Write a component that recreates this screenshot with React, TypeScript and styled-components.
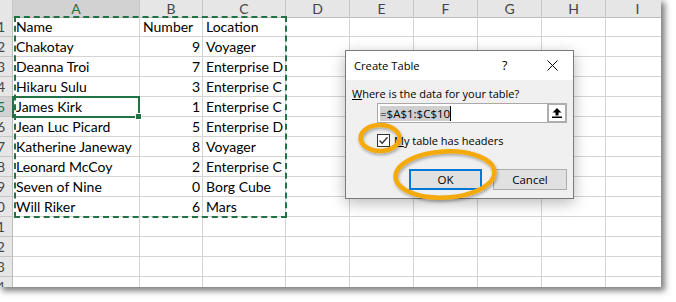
import styled, { createGlobalStyle } from "styled-components";

const GlobalStyle = createGlobalStyle`
  html, body {
    margin: 0;
    padding: 0;
    background: #ffffff;
  }
`;

const COLUMNS = ["A", "B", "C", "D", "E", "F", "G", "H", "I"];

const crew: [string, string, string][] = [
  ["Name", "Number", "Location"],
  ["Chakotay", "9", "Voyager"],
  ["Deanna Troi", "7", "Enterprise D"],
  ["Hikaru Sulu", "3", "Enterprise C"],
  ["James Kirk", "1", "Enterprise C"],
  ["Jean Luc Picard", "5", "Enterprise D"],
  ["Katherine Janeway", "8", "Voyager"],
  ["Leonard McCoy", "2", "Enterprise C"],
  ["Seven of Nine", "0", "Borg Cube"],
  ["Will Riker", "6", "Mars"],
];

const TOTAL_ROWS = 14;
const SELECTED_ROW = 5;

const Frame = styled.div`
  position: relative;
  width: 661px;
  height: 287px;
  margin-bottom: 15px;
`;

const Sheet = styled.div`
  position: relative;
  width: 661px;
  height: 287px;
  overflow: hidden;
  background: #ffffff;
  box-shadow: 3px 3px 6px 1px rgba(0, 0, 0, 0.5);
  font-family: Lato, "Open Sans", sans-serif;
`;

const Row = styled.div<{ $height: number }>`
  display: grid;
  grid-template-columns: 13px 127px 63px 83px repeat(6, 64px);
  height: ${(p) => p.$height}px;
`;

const ColHeader = styled.div<{ $active?: boolean }>`
  display: flex;
  align-items: center;
  justify-content: center;
  box-sizing: border-box;
  background: ${(p) => (p.$active ? "#d2d2d2" : "#e6e6e6")};
  color: ${(p) => (p.$active ? "#217346" : "#444444")};
  border-right: 1px solid #c6c6c6;
  border-bottom: 1px solid #bdbdbd;
  font-size: 14px;
`;

const RowHeader = styled.div<{ $active?: boolean }>`
  display: flex;
  align-items: center;
  justify-content: flex-end;
  box-sizing: border-box;
  overflow: hidden;
  padding-right: 7px;
  background: ${(p) => (p.$active ? "#d2d2d2" : "#e6e6e6")};
  color: ${(p) => (p.$active ? "#217346" : "#444444")};
  border-right: 1px solid #bdbdbd;
  border-bottom: 1px solid #c6c6c6;
  font-size: 14px;
`;

const Cell = styled.div<{ $numeric?: boolean }>`
  display: flex;
  align-items: flex-end;
  justify-content: ${(p) => (p.$numeric ? "flex-end" : "flex-start")};
  box-sizing: border-box;
  padding: 0 2px 0 3px;
  border-right: 1px solid #d4d4d4;
  border-bottom: 1px solid #d4d4d4;
  white-space: nowrap;
  overflow: hidden;
  color: #000000;
  font-size: 14px;
  line-height: 18px;
`;

const Marquee = styled.div`
  position: absolute;
  left: 14px;
  top: 16px;
  width: 273px;
  height: 202px;
  box-sizing: border-box;
  border: 2px dashed #217346;
  pointer-events: none;
`;

const ActiveCell = styled.div`
  position: absolute;
  left: 12px;
  top: 96px;
  width: 128px;
  height: 22px;
  box-sizing: border-box;
  border: 2px solid #217346;
  pointer-events: none;
`;

const FillHandle = styled.div`
  position: absolute;
  right: -4px;
  bottom: -4px;
  width: 5px;
  height: 5px;
  background: #217346;
  border: 1px solid #ffffff;
`;

const Dialog = styled.div`
  position: absolute;
  left: 345px;
  top: 50px;
  width: 229px;
  height: 149px;
  box-sizing: border-box;
  display: flex;
  flex-direction: column;
  border: 1px solid #7a7a7a;
  background: #f0f0f0;
  box-shadow: 0 4px 14px rgba(0, 0, 0, 0.28);
  font-family: "Open Sans", "Noto Sans", sans-serif;
  font-size: 11px;
  color: #000000;
`;

const TitleBar = styled.div`
  display: flex;
  align-items: center;
  height: 29px;
  padding: 0 8px 0 8px;
  background: #ffffff;
`;

const Title = styled.span`
  flex: 1;
  font-size: 11.2px;
`;

const Help = styled.span`
  width: 14px;
  margin-right: 31px;
  font-size: 12.5px;
`;

const CloseIcon = styled.svg`
  width: 11px;
  height: 11px;
  margin-right: 7px;
`;

const Body = styled.div`
  display: flex;
  flex-direction: column;
  padding: 6px 6px 0 6px;
`;

const Prompt = styled.div`
  height: 16px;
  line-height: 16px;
  font-size: 11px;
  & u {
    text-decoration-thickness: 1px;
  }
`;

const InputRow = styled.div`
  display: flex;
  margin: 1px 0 0 25px;
  height: 20px;
`;

const RangeInput = styled.div`
  flex: 1;
  display: flex;
  align-items: center;
  box-sizing: border-box;
  padding-left: 2px;
  background: #ffffff;
  border: 1px solid #a9a9a9;
  border-right: none;
  font-size: 11.5px;
`;

const Selection = styled.span`
  background: #cfcfcf;
  line-height: 15px;
`;

const Caret = styled.span`
  display: inline-block;
  width: 1px;
  height: 15px;
  background: #000000;
`;

const CollapseButton = styled.div`
  width: 20px;
  box-sizing: border-box;
  display: flex;
  align-items: center;
  justify-content: center;
  background: #ffffff;
  border: 2px solid #adadad;
`;

const CheckRow = styled.label`
  display: flex;
  align-items: center;
  gap: 4px;
  margin: 11px 0 0 25px;
  height: 13px;
  font-size: 11px;
`;

const CheckBox = styled.span`
  width: 13px;
  height: 13px;
  box-sizing: border-box;
  display: flex;
  align-items: center;
  justify-content: center;
  background: #ffffff;
  border: 1px solid #333333;
`;

const ButtonRow = styled.div`
  display: flex;
  justify-content: flex-end;
  gap: 11px;
  margin-top: 22px;
`;

const DialogButton = styled.div<{ $primary?: boolean }>`
  width: ${(p) => (p.$primary ? 73 : 74)}px;
  height: 21px;
  box-sizing: border-box;
  display: flex;
  align-items: center;
  justify-content: center;
  background: #e1e1e1;
  border: ${(p) => (p.$primary ? "2px solid #0078d7" : "1px solid #adadad")};
  font-size: 11.5px;
`;

const Annotations = styled.svg`
  position: absolute;
  left: 0;
  top: 0;
  width: 661px;
  height: 287px;
  pointer-events: none;
  overflow: visible;
`;

export default function App() {
  const rows = Array.from({ length: TOTAL_ROWS }, (_, i) => i + 1);
  return (
    <>
      <GlobalStyle />
      <Frame>
        <Sheet>
          <Row $height={17}>
            <ColHeader />
            {COLUMNS.map((c) => (
              <ColHeader key={c} $active={c === "A"}>
                {c}
              </ColHeader>
            ))}
          </Row>
          {rows.map((n) => {
            const data = crew[n - 1];
            return (
              <Row key={n} $height={20}>
                <RowHeader $active={n === SELECTED_ROW}>{n}</RowHeader>
                <Cell>{data?.[0]}</Cell>
                <Cell $numeric={n > 1}>{data?.[1]}</Cell>
                <Cell>{data?.[2]}</Cell>
                {COLUMNS.slice(3).map((c) => (
                  <Cell key={c} />
                ))}
              </Row>
            );
          })}

          <Marquee />
          <ActiveCell>
            <FillHandle />
          </ActiveCell>

          <Dialog>
            <TitleBar>
              <Title>Create Table</Title>
              <Help>?</Help>
              <CloseIcon viewBox="0 0 11 11">
                <path d="M0.5 0.5 L10.5 10.5 M10.5 0.5 L0.5 10.5" stroke="#000" strokeWidth="1" fill="none" />
              </CloseIcon>
            </TitleBar>
            <Body>
              <Prompt>
                <u>W</u>here is the data for your table?
              </Prompt>
              <InputRow>
                <RangeInput>
                  <Selection>=$A$1:$C$10</Selection>
                  <Caret />
                </RangeInput>
                <CollapseButton>
                  <svg width="10" height="10" viewBox="0 0 10 10">
                    <path d="M5 0 L9.5 4.5 L6.5 4.5 L6.5 7.5 L3.5 7.5 L3.5 4.5 L0.5 4.5 Z" fill="#000" />
                    <rect x="0" y="8.5" width="10" height="1.5" fill="#000" />
                  </svg>
                </CollapseButton>
              </InputRow>
              <CheckRow>
                <CheckBox>
                  <svg width="11" height="11" viewBox="0 0 11 11">
                    <path d="M1.5 5.5 L4.2 8.3 L9.5 2.2" stroke="#333" strokeWidth="1.3" fill="none" />
                  </svg>
                </CheckBox>
                <span>
                  <u>M</u>y table has headers
                </span>
              </CheckRow>
              <ButtonRow>
                <DialogButton $primary>OK</DialogButton>
                <DialogButton>Cancel</DialogButton>
              </ButtonRow>
            </Body>
          </Dialog>

          <Annotations viewBox="0 0 661 287">
            <defs>
              <filter id="soft" x="-20%" y="-20%" width="140%" height="140%">
                <feDropShadow dx="1" dy="2" stdDeviation="1.5" floodColor="#000" floodOpacity="0.3" />
              </filter>
            </defs>
            <g fill="none" stroke="#f4a90f" strokeWidth="4.5" filter="url(#soft)">
              <ellipse cx="380" cy="138" rx="19.5" ry="13" />
              <ellipse cx="445" cy="174.5" rx="49.5" ry="23" transform="rotate(-3 445 174.5)" />
            </g>
          </Annotations>
        </Sheet>
      </Frame>
    </>
  );
}
